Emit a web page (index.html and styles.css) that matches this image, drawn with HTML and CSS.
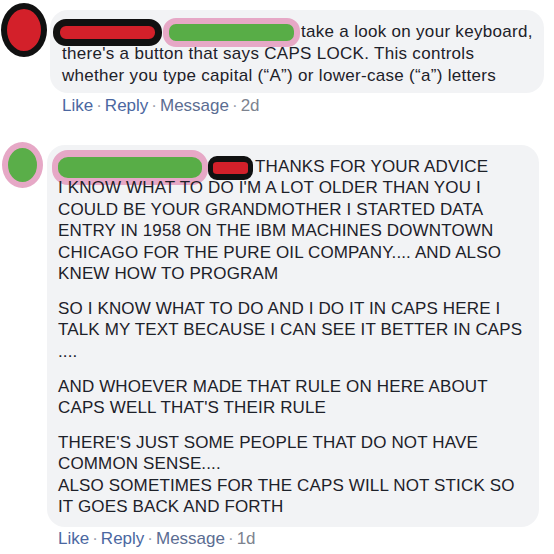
FILE: index.html
```html
<!DOCTYPE html>
<html>
<head>
<meta charset="utf-8">
<link rel="stylesheet" href="styles.css">
</head>
<body>
<div class="thread">
  <div class="comment c1">
    <div class="avatar av-red"></div>
    <div class="content">
      <div class="bubble">
        <span class="mark mark-black n1"></span><span class="mark mark-pink n2"></span>take a look on your keyboard,<br>there's a button that says CAPS LOCK. This controls<br>whether you type capital (“A”) or lower-case (“a”) letters
      </div>
      <div class="actions"><a class="link">Like</a><span class="dot">·</span><a class="link">Reply</a><span class="dot">·</span><a class="link msg">Message</a><span class="dot">·</span><span class="time">2d</span></div>
    </div>
  </div>
  <div class="comment c2">
    <div class="avatar av-green"></div>
    <div class="content">
      <div class="bubble">
        <p><span class="mark mark-pink n3"></span><span class="mark mark-black n4"></span>THANKS FOR YOUR ADVICE<br>I KNOW WHAT TO DO I'M A LOT OLDER THAN YOU I<br>COULD BE YOUR GRANDMOTHER I STARTED DATA<br>ENTRY IN 1958 ON THE IBM MACHINES DOWNTOWN<br>CHICAGO FOR THE PURE OIL COMPANY.... AND ALSO<br>KNEW HOW TO PROGRAM</p>
        <p>SO I KNOW WHAT TO DO AND I DO IT IN CAPS HERE I<br>TALK MY TEXT BECAUSE I CAN SEE IT BETTER IN CAPS<br>....</p>
        <p>AND WHOEVER MADE THAT RULE ON HERE ABOUT<br>CAPS WELL THAT'S THEIR RULE</p>
        <p>THERE'S JUST SOME PEOPLE THAT DO NOT HAVE<br>COMMON SENSE....<br>ALSO SOMETIMES FOR THE CAPS WILL NOT STICK SO<br>IT GOES BACK AND FORTH</p>
      </div>
      <div class="actions"><a class="link">Like</a><span class="dot">·</span><a class="link">Reply</a><span class="dot">·</span><a class="link msg">Message</a><span class="dot">·</span><span class="time">1d</span></div>
    </div>
  </div>
</div>
</body>
</html>
```

FILE: styles.css
```css
html, body {
  margin: 0;
  padding: 0;
  background: #ffffff;
}

body {
  font-family: "Liberation Sans", Arial, sans-serif;
  color: #1d2129;
  width: 554px;
  height: 554px;
  overflow: hidden;
}

.comment {
  display: flex;
  align-items: flex-start;
}

.c1 {
  gap: 3px;
  padding-left: 1px;
}

.c2 {
  gap: 4px;
  padding-left: 2px;
  margin-top: 26px;
}

.avatar {
  box-sizing: border-box;
  border-radius: 50%;
  flex: none;
}

.av-red {
  width: 46px;
  height: 54px;
  margin-top: 3px;
  background: #d3202a;
  border: 6px solid #111111;
}

.av-green {
  width: 41px;
  height: 46px;
  background: #5aae49;
  border: 6px solid #e6a8c6;
}

.c1 .content {
  margin-top: 10px;
  width: 494px;
}

.c2 .content {
  margin-top: 3px;
  width: 492px;
}

.bubble {
  background: #f2f3f5;
  border-radius: 18px;
  font-size: 17px;
  letter-spacing: 0.3px;
  line-height: 22px;
  white-space: nowrap;
}

.c1 .bubble {
  padding: 11px 12px 6px 12px;
}

.c2 .bubble {
  padding: 11px 11px 9px 11px;
  line-height: 21.4px;
  letter-spacing: 0.14px;
}

.bubble p {
  margin: 13.5px 0 0 0;
}

.bubble p:first-child {
  margin-top: 0;
}

.mark {
  display: inline-block;
  box-sizing: border-box;
  vertical-align: middle;
  border-radius: 13px;
}

.mark-black {
  background: #d3202a;
  border: 7px solid #111111;
}

.mark-pink {
  background: #58ad47;
  border: 6px solid #e6a8c6;
}

.n1 {
  width: 109px;
  height: 27px;
  margin: -4px 0 -4px -9px;
}

.n2 {
  width: 137px;
  height: 29px;
  margin: -5px 1px -5px 1px;
}

.n3 {
  width: 156px;
  height: 35px;
  margin: -8px 0 -8px -6px;
  border-width: 7px 6px;
  border-radius: 16px;
}

.n4 {
  width: 45px;
  height: 24px;
  margin: -3px 2px -3px 0;
  border-width: 6px 5px;
  border-radius: 9px;
}

.actions {
  font-size: 17px;
  line-height: 20px;
  padding-left: 12px;
  color: #90949c;
}

.c1 .actions {
  margin-top: 3px;
}

.c2 .actions {
  margin-top: 2px;
  padding-left: 11px;
}

.link {
  color: #4b67a1;
}

.msg {
  color: #5b6d92;
}

.dot {
  margin: 0 3px;
  color: #9aa0ab;
}

.time {
  color: #7d838f;
}
```
